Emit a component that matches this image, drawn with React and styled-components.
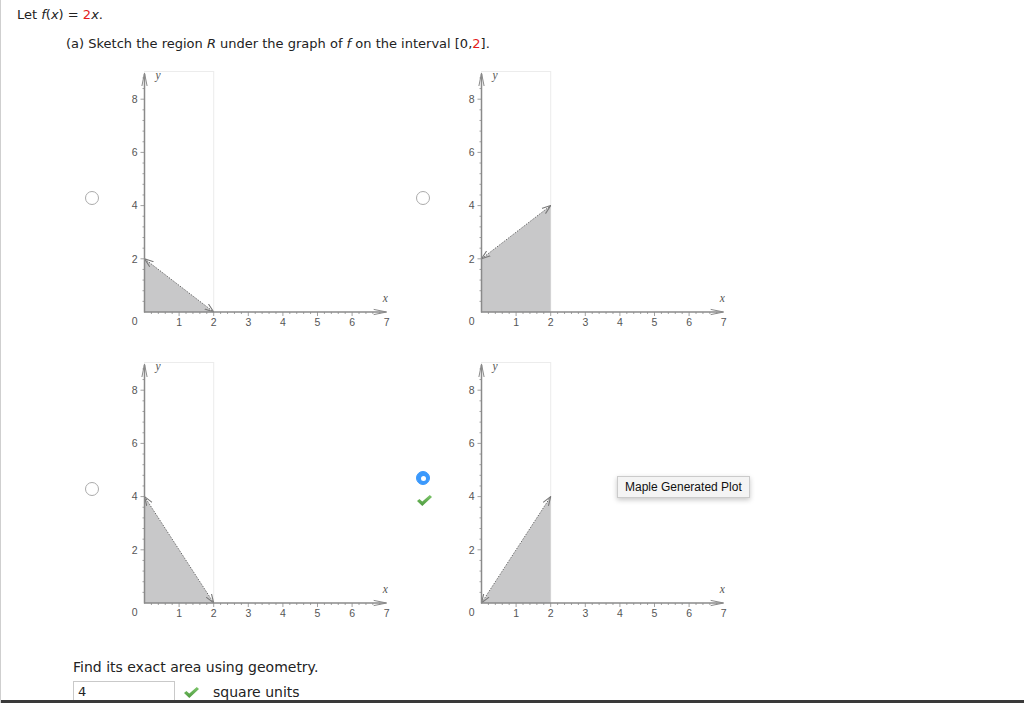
import React from "react";
import styled, { createGlobalStyle } from "styled-components";

const GlobalStyle = createGlobalStyle`
  html, body {
    margin: 0;
    padding: 0;
    background: #ffffff;
  }
  body {
    font-family: "DejaVu Sans", Verdana, sans-serif;
    color: #222;
  }
`;

const Page = styled.div`
  position: relative;
  box-sizing: border-box;
  height: 703px;
  padding: 6px 0 0 16px;
  border-left: 1px solid #cfcfcf;
  overflow: hidden;
  &::after {
    content: "";
    position: absolute;
    left: 0;
    right: 0;
    top: 700px;
    height: 3px;
    background: #3a3a3a;
  }
`;

const Title = styled.div`
  font-size: 13px;
  line-height: 18px;
  white-space: pre;
`;

const Part = styled.div`
  margin-top: 11px;
  padding-left: 49px;
  font-size: 13px;
  line-height: 18px;
`;

const Red = styled.span`
  color: #e41b1b;
`;

const ChoiceGrid = styled.div`
  display: grid;
  grid-template-columns: 30px 301px 36px 300px;
  grid-auto-rows: 272px;
  row-gap: 19px;
  margin: 9px 0 0 60px;
`;

const RadioCell = styled.div`
  display: flex;
  flex-direction: column;
  align-items: flex-start;
  justify-content: center;
  gap: 9px;
  padding-left: 8px;
`;

const Radio = styled.div`
  box-sizing: border-box;
  width: 14px;
  height: 14px;
  border-radius: 50%;
  background: ${(p) => (p.$checked ? "#3b99fc" : "#fff")};
  border: 1px solid ${(p) => (p.$checked ? "#3b99fc" : "#ababab")};
  display: flex;
  align-items: center;
  justify-content: center;
  &::after {
    content: "";
    display: ${(p) => (p.$checked ? "block" : "none")};
    width: 5px;
    height: 5px;
    border-radius: 50%;
    background: #fff;
  }
`;

const PlotCell = styled.div`
  width: 300px;
  height: 272px;
`;

const Prompt = styled.div`
  margin: 33px 0 0 56px;
  font-size: 14px;
  line-height: 18px;
`;

const AnswerRow = styled.div`
  display: flex;
  align-items: center;
  margin: 5px 0 0 56px;
  font-size: 14px;
`;

const AnswerInput = styled.div`
  box-sizing: border-box;
  width: 102px;
  height: 22px;
  border: 1px solid #c9c9c9;
  padding: 2px 4px;
  font-size: 13px;
  line-height: 16px;
`;

const CheckWrap = styled.span`
  display: inline-flex;
  margin: 0 ${(p) => (p.$after || 0)}px 0 ${(p) => (p.$before || 0)}px;
`;

const Tooltip = styled.div`
  position: absolute;
  left: 616px;
  top: 476px;
  box-sizing: border-box;
  height: 22px;
  padding: 0 7px;
  background: #f4f4f4;
  border: 1px solid #cbcbcb;
  box-shadow: 0 2px 5px rgba(0, 0, 0, 0.22);
  font-family: "Liberation Sans", Arial, sans-serif;
  font-size: 12px;
  line-height: 20px;
  color: #111;
  white-space: nowrap;
`;

const Check = () => (
  <svg width="17" height="13" viewBox="0 0 17 13">
    <defs>
      <linearGradient id="chk" x1="0" y1="0" x2="0" y2="1">
        <stop offset="0" stopColor="#7cc56a" />
        <stop offset="1" stopColor="#4e9a3f" />
      </linearGradient>
    </defs>
    <path d="M1 7 L3.4 4.9 L6.3 7.6 L13.8 1 L16 3 L6.3 12 Z" fill="url(#chk)" />
  </svg>
);

// plot geometry (local svg coords)
const OX = 37.5;
const OY = 250;
const UX = 34.6;
const UY = 26.6;
const AXIS = "#8a8a8a";
const LABEL = "#555";

const px = (x) => OX + x * UX;
const py = (y) => OY - y * UY;

const arrowHead = (tx, ty, dir) => {
  if (dir === "right")
    return `M${tx - 13} ${ty - 2.6} L${tx} ${ty} L${tx - 13} ${ty + 2.6}`;
  return `M${tx - 2.6} ${ty + 13} L${tx} ${ty} L${tx + 2.6} ${ty + 13}`;
};

const Plot = ({ y0, y2 }) => {
  const xTicks = [];
  for (let i = 1; i <= 34; i++) {
    const major = i % 5 === 0;
    xTicks.push(
      <line
        key={"x" + i}
        x1={px(i * 0.2)}
        x2={px(i * 0.2)}
        y1={OY}
        y2={OY + (major ? 4 : 2)}
        stroke={AXIS}
        strokeWidth="0.8"
      />
    );
  }
  const yTicks = [];
  for (let i = 1; i <= 22; i++) {
    const major = i % 5 === 0;
    yTicks.push(
      <line
        key={"y" + i}
        x1={OX}
        x2={OX - (major ? 4 : 2)}
        y1={py(i * 0.4)}
        y2={py(i * 0.4)}
        stroke={AXIS}
        strokeWidth="0.8"
      />
    );
  }
  const pts = [
    [px(0), py(0)],
    [px(0), py(y0)],
    [px(2), py(y2)],
    [px(2), py(0)],
  ];
  const uid = `a${y0}${y2}`;
  return (
    <svg width="300" height="272" viewBox="0 0 300 272">
      <defs>
        <marker
          id={uid}
          viewBox="0 0 10 10"
          refX="10"
          refY="5"
          markerWidth="9"
          markerHeight="9"
          markerUnits="userSpaceOnUse"
          orient="auto-start-reverse"
        >
          <path d="M0 1.5 L10 5 L0 8.5" fill="none" stroke="#777" strokeWidth="1.2" />
        </marker>
      </defs>
      <rect
        x={px(0)}
        y="9.5"
        width={2 * UX}
        height={OY - 9.5}
        fill="none"
        stroke="#ececec"
        strokeWidth="1"
      />
      <polygon points={pts.map((p) => p.join(",")).join(" ")} fill="#c8c8c9" />
      <line
        x1={px(0)}
        y1={py(y0)}
        x2={px(2)}
        y2={py(y2)}
        stroke="#6a6a6a"
        strokeWidth="1"
        strokeDasharray="1.4 1.4"
        markerStart={`url(#${uid})`}
        markerEnd={`url(#${uid})`}
      />
      {xTicks}
      {yTicks}
      <line x1={OX - 0.5} y1={OY} x2={px(7) - 1} y2={OY} stroke={AXIS} strokeWidth="1.5" />
      <path d={arrowHead(px(7), OY, "right")} fill="none" stroke={AXIS} strokeWidth="1" />
      <line x1={OX} y1={OY + 0.5} x2={OX} y2={12} stroke={AXIS} strokeWidth="1.5" />
      <path d={arrowHead(OX, 11, "up")} fill="none" stroke={AXIS} strokeWidth="1" />
      <g fontFamily="'Liberation Sans', Arial, sans-serif" fontSize="10.5" fill={LABEL}>
        {[2, 4, 6, 8].map((v) => (
          <text key={v} x={OX - 7} y={py(v) + 3.8} textAnchor="end">
            {v}
          </text>
        ))}
        <text x={OX - 7} y={OY + 13} textAnchor="end">
          0
        </text>
        {[1, 2, 3, 4, 5, 6, 7].map((v) => (
          <text key={v} x={px(v)} y={OY + 14} textAnchor="middle">
            {v}
          </text>
        ))}
      </g>
      <g fontFamily="'Liberation Serif', 'Times New Roman', serif" fontStyle="italic" fontSize="11.5" fill={LABEL}>
        <text x={OX + 11} y="17">
          y
        </text>
        <text x={px(7) - 4} y={OY - 10}>
          x
        </text>
      </g>
    </svg>
  );
};

const choices = [
  { y0: 2, y2: 0 },
  { y0: 2, y2: 4 },
  { y0: 4, y2: 0 },
  { y0: 0, y2: 4, checked: true },
];

export default function App() {
  return (
    <>
      <GlobalStyle />
      <Page>
        <Title>
          Let <i>f</i>(<i>x</i>) = <Red>2</Red>
          <i>x</i>.
        </Title>
        <Part>
          (a) Sketch the region <i>R</i> under the graph of <i>f</i> on the interval [0,<Red>2</Red>].
        </Part>
        <ChoiceGrid>
          {choices.map((c, i) => (
            <React.Fragment key={i}>
              <RadioCell>
                <Radio $checked={c.checked} />
                {c.checked && <Check />}
              </RadioCell>
              <PlotCell>
                <Plot y0={c.y0} y2={c.y2} />
              </PlotCell>
            </React.Fragment>
          ))}
        </ChoiceGrid>
        <Prompt>Find its exact area using geometry.</Prompt>
        <AnswerRow>
          <AnswerInput>4</AnswerInput>
          <CheckWrap $before={8} $after={13}>
            <Check />
          </CheckWrap>
          square units
        </AnswerRow>
        <Tooltip>Maple Generated Plot</Tooltip>
      </Page>
    </>
  );
}
